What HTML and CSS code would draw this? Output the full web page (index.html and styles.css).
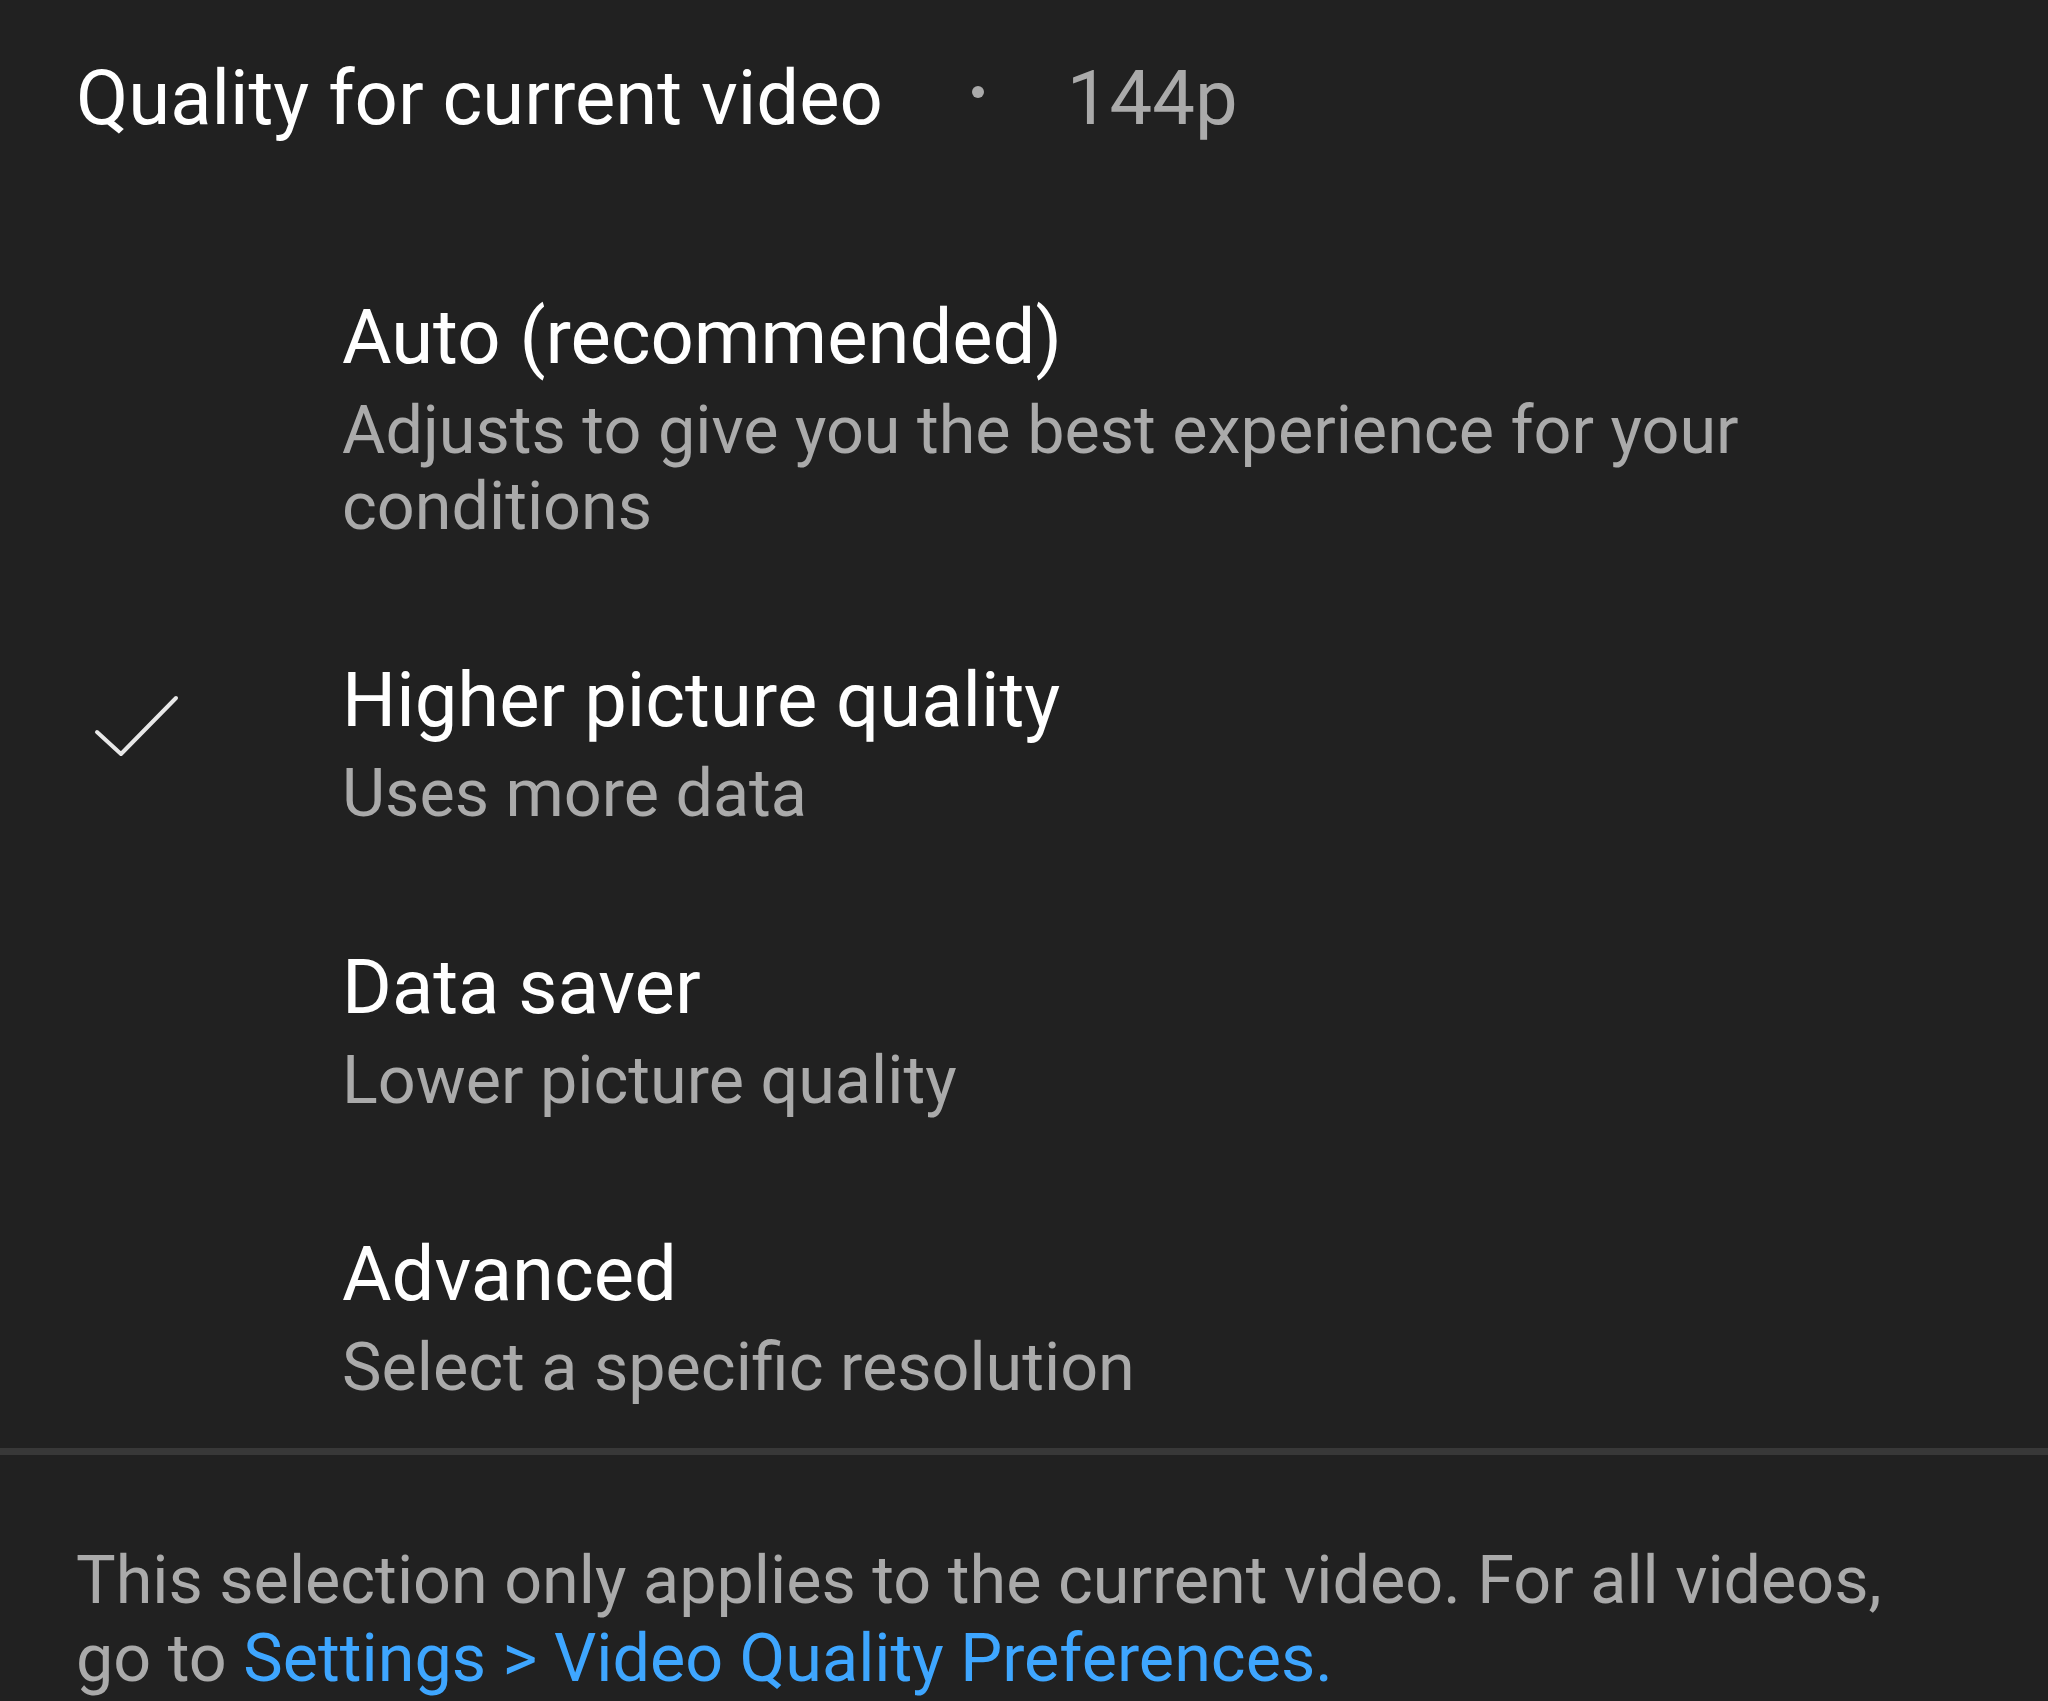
FILE: index.html
```html
<!DOCTYPE html>
<html lang="en">
<head>
<meta charset="utf-8">
<title>Quality for current video</title>
<link rel="stylesheet" href="styles.css">
</head>
<body>
<div class="sheet">
  <div class="header">
    <span class="h-title">Quality for current video</span><span class="dot"></span><span class="h-value">144p</span>
  </div>
  <div class="options">
    <div class="option">
      <div class="icon"></div>
      <div class="text">
        <div class="title">Auto (recommended)</div>
        <div class="sub">Adjusts to give you the best experience for your conditions</div>
      </div>
    </div>
    <div class="option">
      <div class="icon">
        <svg class="check" viewBox="0 0 114 114" width="114" height="114"><polyline points="19,77 43,99 98,43" fill="none" stroke="#e8e8e8" stroke-width="4" stroke-linecap="round" stroke-linejoin="round"/></svg>
      </div>
      <div class="text">
        <div class="title">Higher picture quality</div>
        <div class="sub">Uses more data</div>
      </div>
    </div>
    <div class="option">
      <div class="icon"></div>
      <div class="text">
        <div class="title">Data saver</div>
        <div class="sub">Lower picture quality</div>
      </div>
    </div>
    <div class="option">
      <div class="icon"></div>
      <div class="text">
        <div class="title">Advanced</div>
        <div class="sub">Select a specific resolution</div>
      </div>
    </div>
  </div>
  <div class="divider"></div>
  <p class="footer"><span class="line">This selection only applies to the current video. For all videos,</span> <span class="line">go to <a class="link">Settings &gt; Video Quality Preferences.</a></span></p>
</div>
</body>
</html>
```
FILE: styles.css
```css
html, body {
  margin: 0;
  padding: 0;
  background: #212121;
}
body {
  font-family: Roboto, "Noto Sans", "Liberation Sans", sans-serif;
  color: #ffffff;
  overflow: hidden;
}
.sheet {
  width: 2048px;
  height: 1701px;
}
.header {
  padding: 53px 76px 0 76px;
  font-size: 76px;
  line-height: 90px;
  height: 90px;
  white-space: nowrap;
}
.h-title {
  color: #ffffff;
}
.dot {
  display: inline-block;
  width: 12px;
  height: 12px;
  border-radius: 50%;
  background: #aaaaaa;
  vertical-align: middle;
  margin: 0 83px 24px 89px;
}
.h-value {
  color: #aaaaaa;
}
.options {
  margin-top: 149px;
  display: flex;
  flex-direction: column;
  gap: 111px;
  padding-bottom: 43px;
}
.option {
  display: flex;
  align-items: flex-start;
  padding: 0 76px;
}
.icon {
  flex: none;
  width: 266px;
  height: 90px;
}
.check {
  display: block;
  margin-left: 2px;
}
.text {
  flex: 1;
  min-width: 0;
}
.title {
  font-size: 76px;
  line-height: 90px;
  color: #ffffff;
}
.sub {
  font-size: 66.5px;
  line-height: 76px;
  color: #aaaaaa;
  margin-top: 10px;
}
.divider {
  height: 7px;
  background: #383838;
}
.footer {
  margin: 0;
  padding: 86px 76px 0 76px;
  font-size: 66.5px;
  line-height: 78px;
  color: #aaaaaa;
}
.line {
  white-space: nowrap;
}
.link {
  color: #3ea6ff;
  text-decoration: none;
}
```
